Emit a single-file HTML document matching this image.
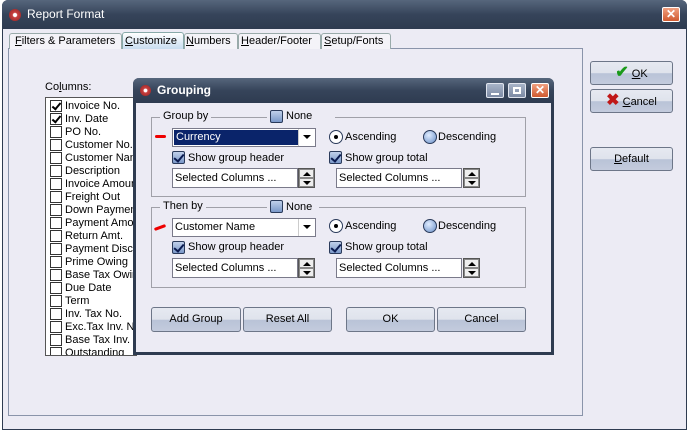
<!DOCTYPE html>
<html><head><style>
*{box-sizing:border-box;margin:0;padding:0}
body{width:688px;height:433px;background:#fff;position:relative;overflow:hidden;font-family:"Liberation Sans",sans-serif;font-size:11px;color:#000}
.a{position:absolute}
.t{position:absolute;white-space:nowrap;line-height:13px}
.title{background:linear-gradient(#56667c,#36445a 50%,#2e3b50);color:#fff}
.xbtn{background:linear-gradient(#f0a080,#d05a30);border:1px solid #fff;border-radius:2px;color:#fff;font-weight:bold;text-align:center;line-height:13px;font-size:12px}
.gbtn{background:linear-gradient(#a8b4c8,#7c8aa4);border:1px solid #e0e4ee;border-radius:2px}
.btn{position:absolute;border:1px solid #6d7688;border-radius:3px;background:linear-gradient(#e6e9f1 0,#dfe3ec 50%,#b9c3d7 52%,#c3cbdd 100%);text-align:center;line-height:22px}
.fs{position:absolute;border:1px solid #a0a0a8}
.cb{position:absolute;width:13px;height:13px;border:1px solid #2a3a5a;background:linear-gradient(#c0d0ea,#7a98c8);border-radius:2px}
.cb.on::after{content:"";position:absolute;left:3px;top:0px;width:4px;height:8px;border:solid #0a1a50;border-width:0 2px 2px 0;transform:rotate(40deg)}
.plain{position:absolute;width:12px;height:12px;border:1px solid #333;background:#fff}
.plain.on::after{content:"";position:absolute;left:3px;top:0px;width:3px;height:7px;border:solid #000;border-width:0 2px 2px 0;transform:rotate(40deg)}
.rd{position:absolute;width:14px;height:14px;border-radius:50%;border:1px solid #2a3a5a;background:radial-gradient(circle at 40% 35%,#e0ecff,#6a90c8)}
.rd.on{background:#fff}
.rd.on::after{content:"";position:absolute;left:4px;top:4px;width:4px;height:4px;border-radius:50%;background:#000}
.box{position:absolute;border:1px solid #7a7a8a;background:#fff;padding-left:2px;line-height:18px}
.spin{position:absolute;width:17px;height:20px;border:1px solid #555;background:#fff}
.spin i{position:absolute;left:0;width:15px;height:9px;border:1px solid #888;background:#eee}
.up::after,.dn::after{content:"";position:absolute;left:3px;border-left:4px solid transparent;border-right:4px solid transparent}
.up::after{top:2px;border-bottom:4px solid #000}
.dn::after{top:2px;border-top:4px solid #000}
.dash{position:absolute;height:3px;background:#e00;border-radius:2px}
u{text-decoration:underline}
</style></head><body>
<div class="a" style="left:2px;top:0;width:685px;height:430px;background:#ecebf4;border:1px solid #2e3b50;border-radius:6px 6px 0 0"></div>
<div class="a title" style="left:2px;top:0;width:685px;height:29px;border-radius:6px 6px 0 0"></div>
<div class="a" style="left:9px;top:9px;width:12px;height:12px;border-radius:50%;background:radial-gradient(#fff 20%,#c84040 30%,#902020)"></div>
<div class="t" style="left:27px;top:8px;color:#fff;font-size:12px">Report Format</div>
<div class="a xbtn" style="left:662px;top:7px;width:18px;height:15px">✕</div>
<div class="a" style="left:8px;top:48px;width:575px;height:368px;border:1px solid #8a94aa"></div>
<div class="t" style="left:9px;top:33px;width:113px;height:16px;border:1px solid #9aa;border-bottom:none;padding:1px 5px;background:#f4f3f8;border-radius:3px 3px 0 0"><u>F</u>ilters &amp; Parameters</div>
<div class="t" style="left:122px;top:32px;width:62px;height:17px;border:1px solid #8aa;border-bottom:none;padding:2px 2px;background:linear-gradient(#fff,#c8ddf0);border-radius:3px 3px 0 0"><u>C</u>ustomize</div>
<div class="t" style="left:184px;top:33px;width:54px;height:16px;border:1px solid #9aa;border-bottom:none;padding:1px 1px;background:#f4f3f8;border-radius:3px 3px 0 0"><u>N</u>umbers</div>
<div class="t" style="left:238px;top:33px;width:83px;height:16px;border:1px solid #9aa;border-bottom:none;padding:1px 2px;background:#f4f3f8;border-radius:3px 3px 0 0"><u>H</u>eader/Footer</div>
<div class="t" style="left:321px;top:33px;width:70px;height:16px;border:1px solid #9aa;border-bottom:none;padding:1px 2px;background:#f4f3f8;border-radius:3px 3px 0 0"><u>S</u>etup/Fonts</div>
<div class="btn" style="left:590px;top:61px;width:83px;height:24px"><span style="color:#1a9a1a;font-size:16px;font-weight:bold">✔</span> <u>O</u>K</div>
<div class="btn" style="left:590px;top:89px;width:83px;height:24px"><span style="color:#c01818;font-size:16px;font-weight:bold">✖</span> <u>C</u>ancel</div>
<div class="btn" style="left:590px;top:147px;width:83px;height:24px"><u>D</u>efault</div>
<div class="t" style="left:45px;top:81px">Co<u>l</u>umns:</div>
<div class="a" style="left:45px;top:97px;width:92px;height:259px;background:#fff;border:1px solid #555;overflow:hidden">
<div style="position:relative">
<div class="plain on" style="left:4px;top:2px"></div><div class="t" style="left:19px;top:2px">Invoice No.</div>
<div class="plain on" style="left:4px;top:15px"></div><div class="t" style="left:19px;top:15px">Inv. Date</div>
<div class="plain" style="left:4px;top:28px"></div><div class="t" style="left:19px;top:28px">PO No.</div>
<div class="plain" style="left:4px;top:41px"></div><div class="t" style="left:19px;top:41px">Customer No.</div>
<div class="plain" style="left:4px;top:54px"></div><div class="t" style="left:19px;top:54px">Customer Name</div>
<div class="plain" style="left:4px;top:67px"></div><div class="t" style="left:19px;top:67px">Description</div>
<div class="plain" style="left:4px;top:80px"></div><div class="t" style="left:19px;top:80px">Invoice Amount</div>
<div class="plain" style="left:4px;top:93px"></div><div class="t" style="left:19px;top:93px">Freight Out</div>
<div class="plain" style="left:4px;top:106px"></div><div class="t" style="left:19px;top:106px">Down Payment</div>
<div class="plain" style="left:4px;top:119px"></div><div class="t" style="left:19px;top:119px">Payment Amount</div>
<div class="plain" style="left:4px;top:132px"></div><div class="t" style="left:19px;top:132px">Return Amt.</div>
<div class="plain" style="left:4px;top:145px"></div><div class="t" style="left:19px;top:145px">Payment Disc.</div>
<div class="plain" style="left:4px;top:158px"></div><div class="t" style="left:19px;top:158px">Prime Owing</div>
<div class="plain" style="left:4px;top:171px"></div><div class="t" style="left:19px;top:171px">Base Tax Owing</div>
<div class="plain" style="left:4px;top:184px"></div><div class="t" style="left:19px;top:184px">Due Date</div>
<div class="plain" style="left:4px;top:197px"></div><div class="t" style="left:19px;top:197px">Term</div>
<div class="plain" style="left:4px;top:210px"></div><div class="t" style="left:19px;top:210px">Inv. Tax No.</div>
<div class="plain" style="left:4px;top:223px"></div><div class="t" style="left:19px;top:223px">Exc.Tax Inv. No</div>
<div class="plain" style="left:4px;top:236px"></div><div class="t" style="left:19px;top:236px">Base Tax Inv.</div>
<div class="plain" style="left:4px;top:249px"></div><div class="t" style="left:19px;top:249px">Outstanding</div>
</div></div>
<div class="a" style="left:133px;top:78px;width:421px;height:277px;background:#ecebf4;border:3px solid #2e3b50;border-top:none;border-radius:6px 6px 0 0"></div>
<div class="a title" style="left:133px;top:78px;width:421px;height:25px;border-radius:6px 6px 0 0"></div>
<div class="a" style="left:140px;top:85px;width:11px;height:11px;border-radius:50%;background:radial-gradient(#fff 20%,#c84040 30%,#902020)"></div>
<div class="t" style="left:157px;top:84px;color:#fff;font-weight:bold;font-size:12px">Grouping</div>
<div class="a gbtn" style="left:486px;top:83px;width:18px;height:15px"><div class="a" style="left:4px;top:9px;width:8px;height:2px;background:#fff"></div></div>
<div class="a gbtn" style="left:508px;top:83px;width:18px;height:15px"><div class="a" style="left:4px;top:3px;width:8px;height:7px;border:2px solid #fff"></div></div>
<div class="a xbtn" style="left:531px;top:83px;width:18px;height:15px">✕</div>

<div class="fs" style="left:151px;top:117px;width:375px;height:80px"></div>
<div class="t" style="left:160px;top:110px;background:#ecebf4;padding:0 3px">Group by</div>
<div class="a" style="left:267px;top:110px;width:68px;height:12px;background:#ecebf4"></div>
<div class="cb" style="left:270px;top:110px"></div><div class="t" style="left:286px;top:110px">None</div>
<div class="dash" style="left:155px;top:135px;width:11px"></div>
<div class="box" style="left:172px;top:128px;width:144px;height:19px;padding:1px"><div style="background:#0a246a;color:#fff;width:124px;height:15px;line-height:15px;padding-left:2px;outline:1px dotted #fff">Currency</div></div>
<div class="a" style="left:298px;top:129px;width:17px;height:17px;border-left:1px solid #ccc"><div class="a" style="left:4px;top:6px;border-left:4px solid transparent;border-right:4px solid transparent;border-top:4px solid #000"></div></div>
<div class="rd on" style="left:329px;top:130px"></div><div class="t" style="left:345px;top:131px">Ascending</div>
<div class="rd" style="left:423px;top:130px"></div><div class="t" style="left:438px;top:131px">Descending</div>
<div class="cb on" style="left:172px;top:151px"></div><div class="t" style="left:188px;top:152px">Show group header</div>
<div class="cb on" style="left:329px;top:151px"></div><div class="t" style="left:345px;top:152px">Show group total</div>
<div class="box" style="left:172px;top:168px;width:126px;height:20px">Selected Columns ...</div>
<div class="spin" style="left:298px;top:168px"><i class="up" style="top:0"></i><i class="dn" style="top:9px"></i></div>
<div class="box" style="left:336px;top:168px;width:126px;height:20px">Selected Columns ...</div>
<div class="spin" style="left:463px;top:168px"><i class="up" style="top:0"></i><i class="dn" style="top:9px"></i></div>

<div class="fs" style="left:151px;top:207px;width:375px;height:81px"></div>
<div class="t" style="left:160px;top:200px;background:#ecebf4;padding:0 3px">Then by</div>
<div class="a" style="left:267px;top:200px;width:52px;height:12px;background:#ecebf4"></div>
<div class="cb" style="left:270px;top:200px"></div><div class="t" style="left:286px;top:201px">None</div>
<div class="dash" style="left:154px;top:226px;width:12px;transform:rotate(-20deg)"></div>
<div class="box" style="left:172px;top:218px;width:144px;height:19px;line-height:17px">Customer Name</div>
<div class="a" style="left:298px;top:219px;width:17px;height:17px;border-left:1px solid #ccc"><div class="a" style="left:4px;top:6px;border-left:4px solid transparent;border-right:4px solid transparent;border-top:4px solid #000"></div></div>
<div class="rd on" style="left:329px;top:219px"></div><div class="t" style="left:345px;top:220px">Ascending</div>
<div class="rd" style="left:423px;top:219px"></div><div class="t" style="left:438px;top:220px">Descending</div>
<div class="cb on" style="left:172px;top:241px"></div><div class="t" style="left:188px;top:241px">Show group header</div>
<div class="cb on" style="left:329px;top:241px"></div><div class="t" style="left:345px;top:241px">Show group total</div>
<div class="box" style="left:172px;top:258px;width:126px;height:20px">Selected Columns ...</div>
<div class="spin" style="left:298px;top:258px"><i class="up" style="top:0"></i><i class="dn" style="top:9px"></i></div>
<div class="box" style="left:336px;top:258px;width:126px;height:20px">Selected Columns ...</div>
<div class="spin" style="left:463px;top:258px"><i class="up" style="top:0"></i><i class="dn" style="top:9px"></i></div>

<div class="btn" style="left:151px;top:307px;width:90px;height:25px">Add Group</div>
<div class="btn" style="left:243px;top:307px;width:89px;height:25px">Reset All</div>
<div class="btn" style="left:346px;top:307px;width:89px;height:25px">OK</div>
<div class="btn" style="left:437px;top:307px;width:89px;height:25px">Cancel</div>
</body></html>
